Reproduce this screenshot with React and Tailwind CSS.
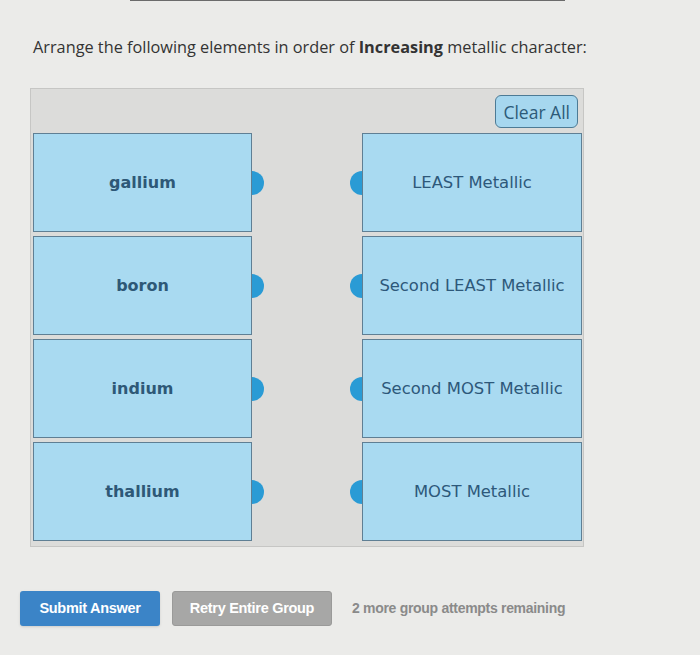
const elements = ["gallium", "boron", "indium", "thallium"];
const targets = ["LEAST Metallic", "Second LEAST Metallic", "Second MOST Metallic", "MOST Metallic"];

function Card({ label, side }) {
  const isLeft = side === "left";
  return (
    <div className="relative h-[99px] bg-[#a9daf1] border border-[#5f7f94] flex items-center justify-center">
      <span
        className={
          isLeft
            ? "text-[16px] font-bold text-[#2e5877] font-['DejaVu_Sans',sans-serif]"
            : "text-[16.4px] text-[#2d587a] font-['DejaVu_Sans',sans-serif]"
        }
      >
        {label}
      </span>
      {isLeft ? (
        <div className="absolute -right-[13px] top-1/2 -translate-y-1/2 w-[12px] h-[24px] rounded-r-full bg-[#2a9bd5]" />
      ) : (
        <div className="absolute -left-[13px] top-1/2 -translate-y-1/2 w-[12px] h-[24px] rounded-l-full bg-[#2a9bd5]" />
      )}
    </div>
  );
}

export default function App() {
  return (
    <div className="w-[700px] h-[655px] bg-[#ebebe9] overflow-hidden font-['Open_Sans',sans-serif]">
      <div className="ml-[130px] w-[435px] h-px bg-[#6b6b6b]" />

      <p className="mt-[34px] ml-[33px] text-[16.3px] text-[#333333]">
        Arrange the following elements in order of <span className="font-bold">Increasing</span> metallic character:
      </p>

      <div className="mt-[29px] ml-[30px] w-[554px] bg-[#dcdcda] border border-[#c6c6c4] pl-[2px] pr-[1px] pb-[5px]">
        <div className="h-[44px] flex items-center justify-end pr-[4px] pt-[1px]">
          <button className="h-[33px] px-[7px] rounded-md bg-[#a6d7ef] border border-[#4d7b95] text-[17.5px] text-[#2d5a78]">
            Clear All
          </button>
        </div>
        <div className="flex justify-between">
          <div className="w-[219px] flex flex-col gap-[4px]">
            {elements.map((e) => (
              <Card key={e} label={e} side="left" />
            ))}
          </div>
          <div className="w-[220px] flex flex-col gap-[4px]">
            {targets.map((t) => (
              <Card key={t} label={t} side="right" />
            ))}
          </div>
        </div>
      </div>

      <div className="mt-[44px] ml-[20px] flex items-center font-['Liberation_Sans',Arial,sans-serif]">
        <button className="w-[140px] h-[35px] rounded-[3px] bg-[#3b84c7] text-white text-[14.5px] font-bold tracking-[-0.3px] shadow-sm">
          Submit Answer
        </button>
        <button className="ml-[12px] w-[160px] h-[35px] rounded-[3px] bg-[#a7a7a6] border border-[#9a9a99] text-white text-[14.5px] font-bold tracking-[-0.3px]">
          Retry Entire Group
        </button>
        <span className="ml-[20px] text-[14px] font-bold text-[#8a8a8a] tracking-[-0.3px]">
          2 more group attempts remaining
        </span>
      </div>
    </div>
  );
}
